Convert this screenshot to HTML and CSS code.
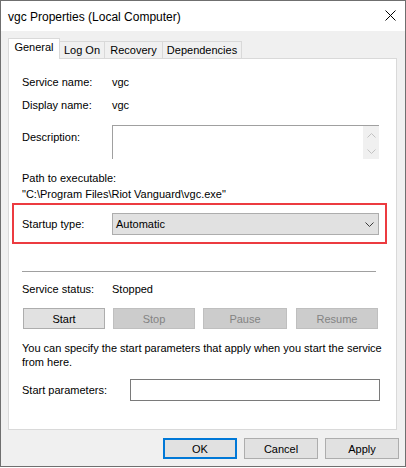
FILE: index.html
```html
<!DOCTYPE html>
<html lang="en">
<head>
<meta charset="utf-8">
<title>vgc Properties (Local Computer)</title>
<link rel="stylesheet" href="styles.css">
</head>
<body>
<div class="window">
  <div class="titlebar">
    <span class="title">vgc Properties (Local Computer)</span>
    <svg class="close" width="11" height="11" viewBox="0 0 11 11" aria-label="Close">
      <path d="M0.5 0.5 L10.5 10.5 M10.5 0.5 L0.5 10.5" stroke="#000" stroke-width="1" fill="none"/>
    </svg>
  </div>
  <div class="client">
    <div class="tabs">
      <div class="tab active">General</div>
      <div class="tab t-logon">Log On</div>
      <div class="tab t-recovery">Recovery</div>
      <div class="tab t-deps">Dependencies</div>
    </div>
    <div class="panel">
      <div class="row r-name"><span class="label">Service name:</span><span class="value">vgc</span></div>
      <div class="row r-display"><span class="label">Display name:</span><span class="value">vgc</span></div>
      <div class="row r-desc">
        <span class="label desc-label">Description:</span>
        <div class="descbox">
          <div class="scroll">
            <svg width="9" height="5" viewBox="0 0 9 5"><path d="M0.5 4.5 L4.5 0.5 L8.5 4.5" stroke="#c2c2c2" fill="none"/></svg>
            <svg width="9" height="5" viewBox="0 0 9 5"><path d="M0.5 0.5 L4.5 4.5 L8.5 0.5" stroke="#c2c2c2" fill="none"/></svg>
          </div>
        </div>
      </div>
      <div class="path-label">Path to executable:</div>
      <div class="path">"C:\Program Files\Riot Vanguard\vgc.exe"</div>
      <div class="highlight">
        <span class="label">Startup type:</span>
        <div class="combo">
          <span>Automatic</span>
          <svg width="9" height="5" viewBox="0 0 9 5"><path d="M0.5 0.5 L4.5 4.5 L8.5 0.5" stroke="#3a3a3a" fill="none"/></svg>
        </div>
      </div>
      <div class="separator"></div>
      <div class="row r-status"><span class="label">Service status:</span><span class="value">Stopped</span></div>
      <div class="svc-buttons">
        <div class="btn b-start">Start</div>
        <div class="btn disabled b-stop">Stop</div>
        <div class="btn disabled b-pause">Pause</div>
        <div class="btn disabled b-resume">Resume</div>
      </div>
      <p class="hint">You can specify the start parameters that apply when you start the service<br>from here.</p>
      <div class="row r-params">
        <span class="label params-label">Start parameters:</span>
        <div class="input"></div>
      </div>
    </div>
    <div class="footer">
      <div class="btn fbtn default">OK</div>
      <div class="btn fbtn">Cancel</div>
      <div class="btn fbtn">Apply</div>
    </div>
  </div>
</div>
</body>
</html>
```

FILE: styles.css
```css
* { box-sizing: border-box; }

body {
  margin: 0;
  font-family: "Liberation Sans", Arial, sans-serif;
  font-size: 11px;
  color: #000;
  background: #fff;
}

.window {
  width: 406px;
  height: 467px;
  border: 1px solid #6f6f6f;
  background: #f0f0f0;
  display: flex;
  flex-direction: column;
}

.titlebar {
  height: 30px;
  background: #fff;
  display: flex;
  align-items: center;
  padding-left: 7px;
}

.title {
  font-size: 12px;
  line-height: 16px;
  margin-top: 1px;
}

.close {
  margin-left: auto;
  margin-right: 9px;
  margin-top: -1px;
}

.client {
  flex: 1;
  display: flex;
  flex-direction: column;
}

.tabs {
  display: flex;
  align-items: flex-end;
  padding: 7px 0 0 7px;
  height: 27px;
}

.tab {
  height: 17px;
  border: 1px solid #d9d9d9;
  border-bottom: none;
  background: #f0f0f0;
  text-align: center;
  line-height: 17px;
  margin-left: -1px;
}

.tab.active {
  position: relative;
  z-index: 1;
  height: 21px;
  width: 52px;
  margin-left: 0;
  margin-bottom: -1px;
  background: #fff;
  line-height: 17px;
}

.t-logon { width: 46px; }
.t-recovery { width: 59px; }
.t-deps { width: 80px; }

.panel {
  height: 372px;
  margin: 0 8px 0 7px;
  background: #fff;
  border: 1px solid #d9d9d9;
  padding-left: 13px;
  display: flex;
  flex-direction: column;
}

.row {
  display: flex;
  align-items: center;
  line-height: 15px;
}

.label {
  width: 90px;
  flex: none;
}

.r-name { margin-top: 16px; height: 15px; }
.r-display { margin-top: 8px; height: 15px; }

.r-desc {
  margin-top: 12px;
  align-items: flex-start;
}

.desc-label { padding-top: 5px; }

.descbox {
  width: 267px;
  height: 34px;
  border-top: 1px solid #a0a0a0;
  border-left: 1px solid #a0a0a0;
  display: flex;
  justify-content: flex-end;
}

.scroll {
  width: 16px;
  height: 33px;
  background: #f0f0f0;
  display: flex;
  flex-direction: column;
  align-items: center;
  justify-content: space-between;
  padding: 7px 0 5px 1px;
}

.scroll svg { display: block; }

.path-label {
  margin-top: 11px;
  line-height: 16px;
}

.path {
  line-height: 16px;
}

.highlight {
  margin: 1px 0 0 -10px;
  width: 375px;
  height: 41px;
  border: 2px solid #ec3b40;
  padding: 8px 0 7px 8px;
  display: flex;
  align-items: center;
}

.combo {
  width: 267px;
  height: 22px;
  background: #e1e1e1;
  border: 1px solid #adadad;
  display: flex;
  align-items: center;
  justify-content: space-between;
  padding: 0 4px 0 3px;
}

.combo svg { display: block; margin-top: 1px; }

.separator {
  margin-top: 27px;
  width: 354px;
  height: 1px;
  background: #a0a0a0;
}

.r-status { margin-top: 10px; height: 15px; }

.svc-buttons {
  margin: 11px 0 0 1px;
  display: flex;
}

.btn {
  height: 21px;
  background: #e1e1e1;
  border: 1px solid #adadad;
  display: flex;
  align-items: center;
  justify-content: center;
}

.btn.disabled {
  background: #cccccc;
  border-color: #bfbfbf;
  color: #838383;
}

.b-start { width: 82px; }
.b-stop { width: 82px; margin-left: 8px; }
.b-pause { width: 84px; margin-left: 8px; }
.b-resume { width: 82px; margin-left: 9px; }

.hint {
  margin: 12px 0 0;
  line-height: 14px;
}

.r-params {
  margin-top: 10px;
}

.params-label { width: 108px; }

.input {
  width: 250px;
  height: 22px;
  border: 1px solid #7a7a7a;
  background: #fff;
}

.footer {
  display: flex;
  justify-content: flex-end;
  gap: 7px;
  padding: 8px 6px 0 0;
}

.fbtn { width: 74px; }

.fbtn.default {
  border: 2px solid #0078d7;
}
```
